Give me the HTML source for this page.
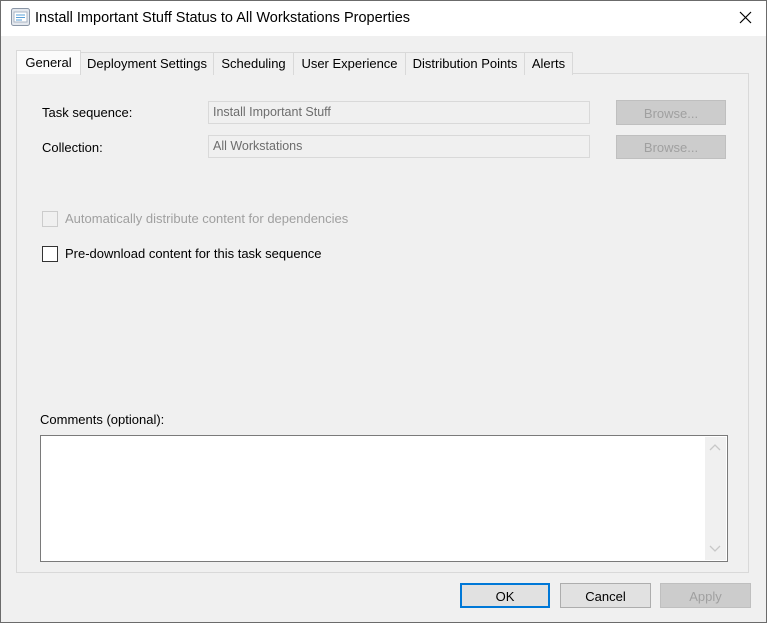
<!DOCTYPE html>
<html><head><style>
*{box-sizing:border-box;margin:0;padding:0}
body{width:768px;height:624px;background:#fff;font-family:"Liberation Sans",sans-serif;font-size:12.5px;color:#000;position:relative;overflow:hidden}
.win{position:absolute;left:0;top:0;width:767px;height:623px;background:#f0f0f0}
.frame{position:absolute;left:0;top:0;width:767px;height:623px;border:1px solid #6b6b6b;pointer-events:none}
.title{position:absolute;left:0;top:0;width:767px;height:36px;background:#fff}
.abs{position:absolute}
.tab{position:absolute;top:52px;height:23px;border:1px solid #d9d9d9;border-bottom:none;background:#f0f0f0;font-size:13px;padding-top:3px;text-align:center}
.field{position:absolute;left:208px;width:382px;height:23px;border:1px solid #d9d9d9;background:#f0f0f0;color:#6d6d6d;padding:3px 4px;font-size:12.5px}
.btn{position:absolute;border:1px solid #bfbfbf;background:#cccccc;color:#a0a0a0;text-align:center;font-size:13px}
.lbl{position:absolute;font-size:13px}
</style></head><body>
<div class="win">
<div class="title">
 <svg class="abs" style="left:11px;top:8px" width="19" height="18" viewBox="0 0 19 18"><rect x="0.5" y="0.5" width="18" height="17" rx="2" fill="#e4e8ee" stroke="#8a96a6"/><rect x="3" y="4" width="13" height="10" fill="#fff" stroke="#a8b4c4"/><line x1="5" y1="7" x2="14" y2="7" stroke="#5aa0d8"/><line x1="5" y1="9.5" x2="14" y2="9.5" stroke="#5aa0d8"/><line x1="5" y1="12" x2="11" y2="12" stroke="#5aa0d8"/></svg>
 <div class="abs" style="left:35px;top:10px;font-size:14.5px;color:#000">Install Important Stuff Status to All Workstations Properties</div>
 <svg class="abs" style="left:739px;top:11px" width="13" height="13"><path d="M1 1L12 12M12 1L1 12" stroke="#000" stroke-width="1.2"/></svg>
</div>
<div class="abs" style="left:16px;top:73px;width:733px;height:500px;border:1px solid #d9d9d9;background:#f0f0f0"></div>
<div class="tab" style="left:80px;width:134px">Deployment Settings</div>
<div class="tab" style="left:213px;width:81px">Scheduling</div>
<div class="tab" style="left:293px;width:113px">User Experience</div>
<div class="tab" style="left:405px;width:120px">Distribution Points</div>
<div class="tab" style="left:524px;width:49px">Alerts</div>
<div class="tab" style="left:16px;top:50px;height:25px;width:65px;background:#fbfbfb;padding-top:4px">General</div>
<div class="abs" style="left:17px;top:74px;width:63px;height:2px;background:#f0f0f0"></div>

<div class="lbl" style="left:42px;top:105px">Task sequence:</div>
<div class="lbl" style="left:42px;top:140px">Collection:</div>
<div class="field" style="top:101px">Install Important Stuff</div>
<div class="field" style="top:135px">All Workstations</div>
<div class="btn" style="left:616px;top:100px;width:110px;height:25px;padding-top:5px">Browse...</div>
<div class="btn" style="left:616px;top:135px;width:110px;height:24px;padding-top:4px">Browse...</div>

<div class="abs" style="left:42px;top:211px;width:16px;height:16px;border:1px solid #cccccc;background:#f0f0f0"></div>
<div class="lbl" style="left:65px;top:211px;color:#a0a0a0">Automatically distribute content for dependencies</div>
<div class="abs" style="left:42px;top:246px;width:16px;height:16px;border:1px solid #333;background:#fff"></div>
<div class="lbl" style="left:65px;top:246px">Pre-download content for this task sequence</div>

<div class="lbl" style="left:40px;top:412px">Comments (optional):</div>
<div class="abs" style="left:40px;top:435px;width:688px;height:127px;border:1px solid #7a7a7a;background:#fff"></div>
<div class="abs" style="left:705px;top:437px;width:21px;height:123px;background:#f0f0f0"></div>
<svg class="abs" style="left:709px;top:444px" width="12" height="8"><path d="M1 6L6 1L11 6" fill="none" stroke="#c8c8c8" stroke-width="1.3"/></svg>
<svg class="abs" style="left:709px;top:545px" width="12" height="8"><path d="M1 1L6 6L11 1" fill="none" stroke="#c8c8c8" stroke-width="1.3"/></svg>

<div class="btn" style="left:460px;top:583px;width:90px;height:25px;border:2px solid #0078d7;background:#e1e1e1;color:#000;padding-top:4px">OK</div>
<div class="btn" style="left:560px;top:583px;width:91px;height:25px;border-color:#adadad;background:#e1e1e1;color:#000;padding-top:5px">Cancel</div>
<div class="btn" style="left:660px;top:583px;width:91px;height:25px;padding-top:5px">Apply</div>
</div>
<div class="frame"></div>
</body></html>
